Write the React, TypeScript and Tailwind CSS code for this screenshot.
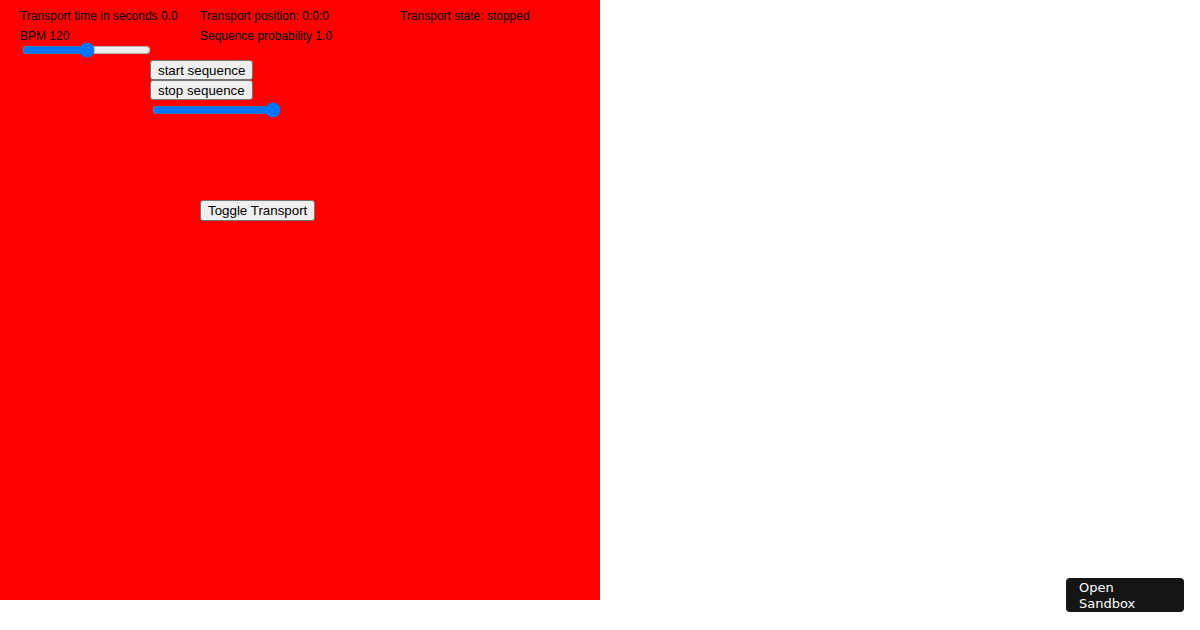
import React from 'react';

// Native-looking button, since preflight strips the browser defaults
const buttonClass =
    "block bg-[#efefef] border border-[#767676] rounded-[3px] px-[7px] text-[13.33px] leading-[16px] text-black font-['Liberation_Sans',Arial,sans-serif] cursor-default";

const sliderClass = "block w-[129px] h-[16px] accent-[#0075ff] cursor-default";

export default function App() {
    return (
        <div className="relative min-h-[630px] bg-white font-['Liberation_Sans',Arial,sans-serif] text-[12px] text-black">
            <div className="w-[600px] h-[600px] bg-[#ff0000] pt-[9px]">
                {/* status row */}
                <div className="grid grid-cols-[180px_200px_200px] pl-[20px] leading-[14px]">
                    <span>Transport time in seconds 0.0</span>
                    <span>Transport position: 0:0:0</span>
                    <span>Transport state: stopped</span>
                </div>

                {/* bpm + probability row */}
                <div className="grid grid-cols-[180px_200px] pl-[20px] mt-[6px] leading-[14px]">
                    <div>
                        <span className="block">BPM 120</span>
                        <input
                            type="range"
                            min={60}
                            max={180}
                            defaultValue={120}
                            className={`${sliderClass} ml-[2px] -mt-[1px] mb-[2px]`}
                        />
                    </div>
                    <span>Sequence probability 1.0</span>
                </div>

                {/* sequence controls */}
                <div className="flex flex-col items-start ml-[150px]">
                    <button className={`${buttonClass} h-[20px] pt-[2px]`}>start sequence</button>
                    <button className={`${buttonClass} h-[20px] pt-[2px]`}>stop sequence</button>
                    <input
                        type="range"
                        min={0}
                        max={1}
                        step={0.01}
                        defaultValue={1}
                        className={`${sliderClass} m-[2px]`}
                    />
                </div>

                <div className="ml-[200px] mt-[80px]">
                    <button className={`${buttonClass} h-[21px]`}>Toggle Transport</button>
                </div>
            </div>

            <button className="absolute left-[1066px] top-[578px] w-[118px] h-[34px] rounded-[4px] bg-[#151515] pl-[13px] pt-[1px] text-left text-[13px] leading-[16px] text-white font-['DejaVu_Sans',sans-serif]">
                <span className="block w-[64px]">Open Sandbox</span>
            </button>
        </div>
    );
}
